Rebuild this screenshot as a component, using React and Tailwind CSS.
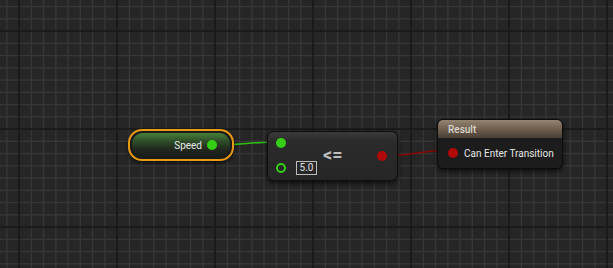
import React from "react";

function GridBackground() {
  const minor = [];
  for (let i = 1; i < 8; i++) minor.push(1 + i * 12.25);
  return (
    <svg className="absolute inset-0" width="613" height="268">
      <defs>
        <pattern id="grid" x="18" y="30" width="98" height="98" patternUnits="userSpaceOnUse">
          <rect width="98" height="98" fill="#262626" />
          {minor.map(p => (
            <g key={p}>
              <rect x={p - 0.6} y="0" width="1.3" height="98" fill="#363636" />
              <rect x="0" y={p - 0.6} width="98" height="1.3" fill="#363636" />
            </g>
          ))}
          <rect x="0.3" y="0" width="1.5" height="98" fill="#161616" />
          <rect x="0" y="0.3" width="98" height="1.5" fill="#161616" />
        </pattern>
      </defs>
      <rect width="613" height="268" fill="url(#grid)" />
    </svg>
  );
}

function Wires() {
  return (
    <svg className="absolute inset-0" width="613" height="268">
      <path d="M212 145 C 245 145, 248 142, 280 142" stroke="#2fc20f" strokeWidth="1.5" fill="none" />
      <path d="M382 156 C 415 156, 420 150, 452 150" stroke="#8a0606" strokeWidth="1.5" fill="none" />
    </svg>
  );
}

export default function App() {
  return (
    <div className="relative w-[613px] h-[268px] overflow-hidden bg-[#262626] font-['Roboto',sans-serif]">
      <GridBackground />
      <Wires />

      {/* Speed getter node */}
      <div className="absolute left-[128px] top-[129px] w-[106px] h-[32px] rounded-[14px] border-2 border-[#e89a12] bg-[#1b1b1b] p-[2px] shadow-[0_2px_4px_rgba(0,0,0,0.6)]">
        <div className="flex h-full items-center justify-end gap-[5px] rounded-[11px] bg-[linear-gradient(180deg,#47803a_0%,#2e4c27_35%,#1f261e_70%,#1a1d19_100%)] pr-[13px]">
          <span className="text-[10px] text-[#e8e8e8]">Speed</span>
          <span className="w-[10px] h-[10px] rounded-full bg-[#35d016]" />
        </div>
      </div>

      {/* <= node */}
      <div className="absolute left-[267px] top-[131px] w-[131px] h-[50px] flex items-center rounded-[7px] border border-[#0e0e0e] bg-[linear-gradient(180deg,#3a3a3a_0%,#2b2b2b_20%,#262626_100%)] pl-[8px] pr-[10px] shadow-[0_2px_5px_rgba(0,0,0,0.7)]">
        <div className="flex flex-col gap-[13px]">
          <span className="w-[10px] h-[10px] rounded-full bg-[#35d016]" />
          <div className="flex items-center gap-[10px]">
            <span className="w-[10px] h-[10px] rounded-full border-2 border-[#35d016]" />
            <span className="w-[21px] h-[14px] border border-[#bdbdbd] flex items-center justify-center text-[10px] leading-none text-[#e0e0e0]">5.0</span>
          </div>
        </div>
        <span className="ml-[6px] mb-[2px] text-[18px] font-bold text-[#bdbdbd] leading-none">&lt;=</span>
        <span className="ml-auto w-[10px] h-[10px] rounded-full bg-[#b00a0a]" />
      </div>

      {/* Result node */}
      <div className="absolute left-[437px] top-[119px] w-[126px] h-[50px] rounded-[6px] border border-[#0c0c0c] bg-[#1c1c1c] overflow-hidden shadow-[0_2px_5px_rgba(0,0,0,0.7)]">
        <div className="h-[18px] flex items-center pl-[10px] bg-[linear-gradient(180deg,#948471_0%,#6e5f50_50%,#4a3f36_100%)]">
          <span className="text-[10px] text-[#dcd6cc] font-medium">Result</span>
        </div>
        <div className="flex items-center gap-[6px] h-[30px] pl-[10px]">
          <span className="w-[10px] h-[10px] rounded-full bg-[#b00a0a]" />
          <span className="text-[10px] text-[#e8e8e8] whitespace-nowrap">Can Enter Transition</span>
        </div>
      </div>
    </div>
  );
}
